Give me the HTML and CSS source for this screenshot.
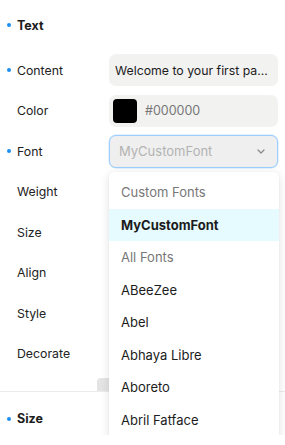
FILE: index.html
```html
<!DOCTYPE html>
<html>
<head>
<meta charset="utf-8">
<link rel="stylesheet" href="styles.css">
</head>
<body>
<div class="panel">
  <section class="section">
    <div class="header"><span class="dot"></span><span class="title">Text</span></div>
    <div class="rows">
      <div class="row">
        <div class="label"><span class="dot"></span>Content</div>
        <div class="field"><span class="value">Welcome to your first pa...</span></div>
      </div>
      <div class="row">
        <div class="label">Color</div>
        <div class="field color-field"><span class="swatch"></span><span class="muted">#000000</span></div>
      </div>
      <div class="row">
        <div class="label"><span class="dot"></span>Font</div>
        <div class="field select">
          <span class="placeholder">MyCustomFont</span>
          <svg class="chev" width="8" height="5" viewBox="0 0 8 5"><path d="M1 1l3 3 3-3" fill="none" stroke="#888" stroke-width="1.2" stroke-linecap="round" stroke-linejoin="round"/></svg>
          <div class="dropdown">
            <div class="group">Custom Fonts</div>
            <div class="opt active">MyCustomFont</div>
            <div class="group">All Fonts</div>
            <div class="opt">ABeeZee</div>
            <div class="opt">Abel</div>
            <div class="opt">Abhaya Libre</div>
            <div class="opt">Aboreto</div>
            <div class="opt">Abril Fatface</div>
          </div>
        </div>
      </div>
      <div class="row"><div class="label">Weight</div></div>
      <div class="row"><div class="label">Size</div></div>
      <div class="row"><div class="label">Align</div></div>
      <div class="row"><div class="label">Style</div></div>
      <div class="row"><div class="label">Decorate</div></div>
    </div>
    <div class="extra"><span class="chip"></span></div>
  </section>
  <section class="section second">
    <div class="header"><span class="dot"></span><span class="title">Size</span></div>
  </section>
</div>
</body>
</html>
```
FILE: styles.css
```css
* { box-sizing: border-box; }
html, body { margin: 0; padding: 0; background: #fff; }
body {
  font-family: Inter, "Noto Sans", sans-serif;
  font-size: 12px;
  color: #1c1c1c;
  overflow: hidden;
}
.panel { width: 285px; }
.section { padding: 9px 7px 0 0; border-bottom: 1px solid #ececec; }
.section.second { border-bottom: none; padding-top: 11px; }
.header { position: relative; height: 32px; display: flex; align-items: center; padding-left: 17px; }
.title { font-weight: 700; font-size: 12.5px; }
.dot {
  position: absolute; left: 7px; top: 50%;
  width: 4px; height: 4px; margin-top: -2px;
  border-radius: 50%; background: #1f8ef1;
}
.rows { margin-top: 13px; display: flex; flex-direction: column; gap: 8.5px; }
.row { display: flex; align-items: center; height: 32px; }
.label { position: relative; flex: 0 0 109px; padding-left: 17px; color: #222; font-size: 12.3px; }
.field {
  position: relative; flex: 1 1 auto; min-width: 0; height: 32px;
  background: #f2f2f1; border-radius: 7px;
  display: flex; align-items: center; padding: 0 6px;
}
.value { color: #1c1c1c; white-space: nowrap; overflow: hidden; font-size: 12.3px; }
.color-field { padding-left: 4px; gap: 8px; }
.swatch { width: 24px; height: 24px; border-radius: 4px; background: #000; }
.muted { color: #777; font-size: 12.5px; }
.select {
  background: #efefef; border: 1px solid #9ccfff;
  box-shadow: 0 0 0 0.5px #c7e4ff;
  justify-content: space-between; padding: 0 12px 0 9px; height: 33px;
}
.placeholder { color: #b3b3b3; font-size: 13px; }
.chev { margin-top: 1px; }
.dropdown {
  position: absolute; left: -1px; top: 36px; width: 170px;
  background: #fff; border-radius: 5px; padding: 4.5px 0 6px;
  box-shadow: 0 2px 10px rgba(0,0,0,0.12), 0 0 1px rgba(0,0,0,0.08);
  z-index: 10;
}
.group, .opt { height: 32.5px; display: flex; align-items: center; padding-left: 12px; font-size: 13px; }
.group { color: #777; }
.opt { color: #1c1c1c; }
.opt.active { background: #e5fbff; font-weight: 700; }
.extra { height: 21px; display: flex; align-items: flex-end; }
.chip { margin-left: 97px; width: 16px; height: 13px; background: #e4e4e4; border-radius: 4px 0 0 0; }
```
